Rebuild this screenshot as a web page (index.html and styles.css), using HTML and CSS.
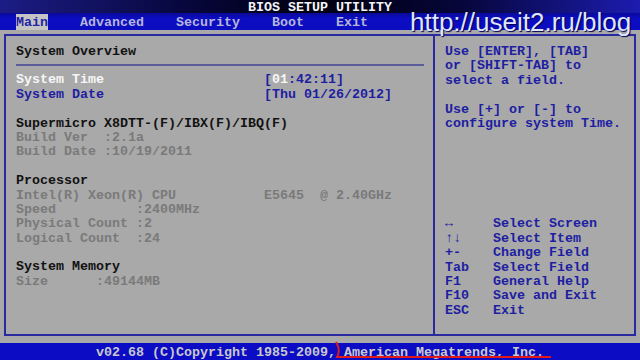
FILE: index.html
```html
<!DOCTYPE html>
<html>
<head>
  <title>BIOS Setup Utility</title>
  <link rel="stylesheet" href="styles.css">
</head>
<body>
  <div class="screen">
    <header class="titlebar">BIOS SETUP UTILITY</header>

    <nav class="tabs">
      <span class="tab active">Main</span>
      <span class="tab wide">Advanced</span>
      <span class="tab wide">Security</span>
      <span class="tab">Boot</span>
      <span class="tab">Exit</span>
    </nav>

    <div class="desk">
      <main class="frame">
        <section class="left">
          <div class="row dark">System Overview</div>
          <div class="rule"></div>
          <div class="row white">System Time                    <span class="blue">[<span class="white">01</span>:42:11]</span></div>
          <div class="row blue">System Date                    [Thu 01/26/2012]</div>
          <div class="row"> </div>
          <div class="row dark">Supermicro X8DTT-(F)/IBX(F)/IBQ(F)</div>
          <div class="row gray">Build Ver  :2.1a</div>
          <div class="row gray">Build Date :10/19/2011</div>
          <div class="row"> </div>
          <div class="row dark">Processor</div>
          <div class="row gray">Intel(R) Xeon(R) CPU           E5645  @ 2.40GHz</div>
          <div class="row gray">Speed          :2400MHz</div>
          <div class="row gray">Physical Count :2</div>
          <div class="row gray">Logical Count  :24</div>
          <div class="row"> </div>
          <div class="row dark">System Memory</div>
          <div class="row gray">Size      :49144MB</div>
        </section>

        <aside class="right">
          <div class="row blue">Use [ENTER], [TAB]</div>
          <div class="row blue">or [SHIFT-TAB] to</div>
          <div class="row blue">select a field.</div>
          <div class="row"> </div>
          <div class="row blue">Use [+] or [-] to</div>
          <div class="row blue">configure system Time.</div>

          <div class="keys">
            <div class="row blue">↔     Select Screen</div>
            <div class="row blue">↑↓    Select Item</div>
            <div class="row blue">+-    Change Field</div>
            <div class="row blue">Tab   Select Field</div>
            <div class="row blue">F1    General Help</div>
            <div class="row blue">F10   Save and Exit</div>
            <div class="row blue">ESC   Exit</div>
          </div>
        </aside>
      </main>
    </div>

    <footer class="footer">v02.68 (C)Copyright 1985-2009, American Megatrends, Inc.</footer>

    <!-- overlays from the video capture -->
    <div class="watermark">http://useit2.ru/blog</div>
    <svg class="scribble" width="640" height="360" viewBox="0 0 640 360">
      <path d="M336 342 Q341 350 337 357 L551 357" fill="none" stroke="#e01a1a" stroke-width="2"/>
    </svg>
  </div>
</body>
</html>
```

FILE: styles.css
```css
body {
  margin: 0;
  background-color: #000;
}

.screen {
  position: relative;
  width: 640px;
  height: 360px;
  overflow: hidden;
  font-family: "Liberation Mono", "DejaVu Sans Mono", monospace;
  font-size: 13.33px;
  font-weight: bold;
  background-color: #a9a9a9;
}

.titlebar {
  height: 13px;
  line-height: 15px;
  text-align: center;
  color: #f4f4f4;
  background: linear-gradient(to right, #1c1c86 0%, #06063a 30%, #000010 50%, #06063a 72%, #1c1cb0 100%);
}

.tabs {
  display: flex;
  align-items: center;
  height: 17px;
  padding-left: 16px;
  background: linear-gradient(to bottom, #0a0a9a 0%, #0c0cc0 30%, #0c0cc0 100%);
}

.tab {
  width: 64px;
  line-height: 15px;
  padding-top: 1px;
  color: #b4b6dc;
  white-space: pre;
}

.tab.wide {
  width: 96px;
}

.tab.active {
  width: 32px;
  margin-right: 32px;
  color: #2424a4;
  background-color: #c4c4c4;
}

.desk {
  height: 306px;
  padding: 4px 4px 3px 4px;
}

.frame {
  display: flex;
  height: 302px;
  box-sizing: border-box;
  border: 2px solid #2a2a9e;
}

.left {
  width: 429px;
  padding: 9px 0 0 10px;
  box-sizing: border-box;
  border-right: 2px solid #2a2a9e;
}

.right {
  flex: 1;
  padding: 9px 0 0 10px;
}

.row {
  height: 14.4px;
  line-height: 14.4px;
  white-space: pre;
}

.rule {
  width: 408px;
  height: 2px;
  margin: 5px 0 7px 0;
  background-color: #5c5c9c;
}

.keys {
  margin-top: 86px;
}

.dark {
  color: #121212;
}

.white {
  color: #f6f6f6;
}

.blue {
  color: #1e1ea2;
}

.gray {
  color: #7a7a7a;
}

.footer {
  height: 17px;
  line-height: 19px;
  text-align: center;
  color: #c8c8cc;
  background-color: #0c0cc4;
}

.watermark {
  position: absolute;
  left: 410px;
  top: 7px;
  font-family: "Liberation Sans", Arial, sans-serif;
  font-size: 26px;
  font-weight: normal;
  line-height: 30px;
  color: #dfe5ff;
  text-shadow: 1px 1px 1px #00004a;
}

.scribble {
  position: absolute;
  left: 0;
  top: 0;
}
```
